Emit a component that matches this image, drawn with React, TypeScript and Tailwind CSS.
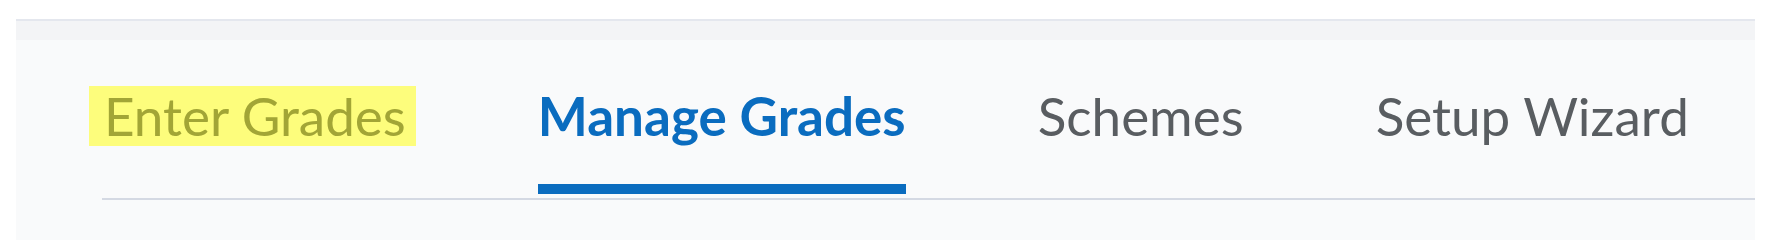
const tabs = [
    { label: "Enter Grades", highlight: true },
    { label: "Manage Grades", active: true },
    { label: "Schemes" },
    { label: "Setup Wizard" },
];

export default function App() {
    return (
        <div className="w-full h-[245px] bg-white pt-[19px] pl-4 pr-6 font-['Lato','Liberation_Sans',sans-serif]">
            <div className="h-[221px] bg-[#f9fafb] border-t-2 border-[#e4e7ee]">
                <div className="h-[19px] bg-[#f3f4f6]" />
                <ul className="ml-[86px] mt-[49px] flex gap-[128px] border-b-2 border-[#d4d9e3]">
                    {tabs.map((t) => (
                        <li key={t.label} className="flex flex-col px-[2px]">
                            <span
                                className={
                                    "text-[53px] leading-none whitespace-nowrap " +
                                    (t.active ? "font-bold text-[#0a6cbf]" : "text-[#595d61]")
                                }
                            >
                                {t.highlight ? (
                                    <span className="inline-block bg-[#fdfd7c] text-[#a2a536] pl-[15px] pr-[10px] -ml-[15px] -mr-[10px] pt-[3px] pb-[4px] -mt-[3px] -mb-[4px]">
                                        {t.label}
                                    </span>
                                ) : (
                                    t.label
                                )}
                            </span>
                            <div className={"mt-[42px] h-[10px] mb-[4px] " + (t.active ? "bg-[#0a6cbf]" : "")} />
                        </li>
                    ))}
                </ul>
            </div>
        </div>
    );
}
